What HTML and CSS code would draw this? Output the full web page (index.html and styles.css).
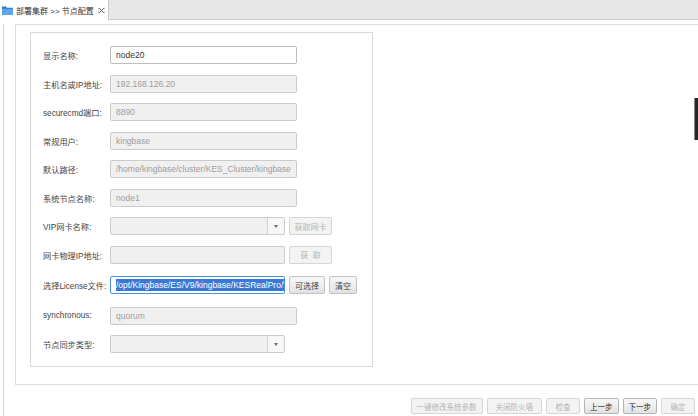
FILE: index.html
```html
<!DOCTYPE html>
<html lang="zh-CN">
<head>
    <meta charset="UTF-8">
    <title>节点配置</title>
    <link rel="stylesheet" href="styles.css">
</head>
<body>
    <div class="tabbar">
        <div class="tab">
            <svg class="tab-icon" width="11" height="9" viewBox="0 0 11 9">
                <path d="M0 0.5h4l1 1.2h6V9H0z" fill="#2f7cc8"/>
                <path d="M0 2.8h11V9H0z" fill="#5aa6e8"/>
            </svg>
            <span class="tab-title">部署集群 &gt;&gt; 节点配置</span>
            <svg class="tab-close" width="7" height="7" viewBox="0 0 7 7">
                <path d="M1.2 1.2l4.6 4.6M5.8 1.2L1.2 5.8" stroke="#555" stroke-width="1"/>
                <path d="M0 0.5v2M7 0.5v2M0 4.5v2M7 4.5v2" stroke="#777" stroke-width="0.8"/>
            </svg>
        </div>
        <div class="tab-fill"></div>
    </div>

    <div class="editor">
        <div class="panel">
            <div class="form-box">
                <div class="row">
                    <span class="label">显示名称:</span>
                    <div class="field editable">node20</div>
                </div>
                <div class="row">
                    <span class="label">主机名或IP地址:</span>
                    <div class="field">192.168.126.20</div>
                </div>
                <div class="row">
                    <span class="label">securecmd端口:</span>
                    <div class="field">8890</div>
                </div>
                <div class="row">
                    <span class="label">常规用户:</span>
                    <div class="field">kingbase</div>
                </div>
                <div class="row">
                    <span class="label">默认路径:</span>
                    <div class="field">/home/kingbase/cluster/KES_Cluster/kingbase</div>
                </div>
                <div class="row">
                    <span class="label">系统节点名称:</span>
                    <div class="field">node1</div>
                </div>
                <div class="row">
                    <span class="label">VIP网卡名称:</span>
                    <div class="field combo"><span class="combo-arrow"><i class="caret"></i></span></div>
                    <button class="btn btn-fetch" disabled>获取网卡</button>
                </div>
                <div class="row">
                    <span class="label">网卡物理IP地址:</span>
                    <div class="field short"></div>
                    <button class="btn btn-fetch" disabled>获 &nbsp;取</button>
                </div>
                <div class="row spaced">
                    <span class="label">选择License文件:</span>
                    <div class="field short focused"><span class="selection">/opt/Kingbase/ES/V9/kingbase/KESRealPro/V9</span></div>
                    <button class="btn">可选择</button>
                    <button class="btn">清空</button>
                </div>
                <div class="row spaced">
                    <span class="label">synchronous:</span>
                    <div class="field">quorum</div>
                </div>
                <div class="row">
                    <span class="label">节点同步类型:</span>
                    <div class="field combo"><span class="combo-arrow"><i class="caret"></i></span></div>
                </div>
            </div>
        </div>

        <div class="actions">
            <button class="btn" disabled>一键修改系统参数</button>
            <button class="btn wide" disabled>关闭防火墙</button>
            <button class="btn" disabled>检查</button>
            <button class="btn">上一步</button>
            <button class="btn">下一步</button>
            <button class="btn" disabled>确定</button>
        </div>
    </div>

    <div class="side-handle"></div>
</body>
</html>
```

FILE: styles.css
```css
* {
    box-sizing: border-box;
    margin: 0;
    padding: 0;
}

body {
    position: relative;
    width: 698px;
    height: 416px;
    overflow: hidden;
    background: #fff;
    font-family: "Liberation Sans", "Noto Sans CJK SC", sans-serif;
    font-size: 8.2px;
    color: #444;
}

/* tab strip */
.tabbar {
    display: flex;
    height: 20px;
}

.tab {
    width: 109px;
    display: flex;
    align-items: center;
    padding-left: 2px;
    background: #fff;
    border-right: 1px solid #c8c8c8;
}

.tab-icon {
    margin-right: 3px;
}

.tab-title {
    font-size: 8px;
    color: #333;
    margin-right: 4px;
}

.tab-fill {
    flex: 1;
    background: #e7e7e7;
    border-bottom: 1px solid #cdcdcd;
}

/* editor area */
.editor {
    margin-left: 3px;
    border-left: 1px solid #d4d4d4;
    height: 396px;
}

.panel {
    margin: 4px -20px 0 11px;
    height: 361px;
    border: 1px solid #dcdcdc;
    padding: 7px 0 0 14px;
}

.form-box {
    width: 343px;
    height: 335px;
    border: 1px solid #d8d8d8;
    padding: 13px 0 0 12px;
    display: flex;
    flex-direction: column;
    gap: 10.5px;
}

.row {
    display: flex;
    align-items: center;
    height: 18px;
}

.row.spaced {
    margin-top: 2px;
}

.label {
    width: 67px;
    white-space: nowrap;
}

.field {
    width: 187px;
    height: 18px;
    padding: 0 5px;
    border: 1px solid #cbcbcb;
    border-radius: 2px;
    background: #f0f0f0;
    color: #9d9d9d;
    font-size: 8.5px;
    line-height: 16px;
    white-space: nowrap;
    overflow: hidden;
}

.field.editable {
    background: #fff;
    color: #333;
    border-color: #bdbdbd;
}

.field.short,
.field.combo {
    width: 175px;
}

.field.focused {
    background: #fff;
    border-color: #4b8fe0;
}

.selection {
    background: #3a78d8;
    color: #fff;
    padding: 1px 0;
}

.field.combo {
    display: flex;
    justify-content: flex-end;
    padding: 0;
}

.combo-arrow {
    width: 17px;
    height: 100%;
    border-left: 1px solid #d0d0d0;
    background: #f7f7f7;
    display: flex;
    align-items: center;
    justify-content: center;
}

.caret {
    border-left: 2.5px solid transparent;
    border-right: 2.5px solid transparent;
    border-top: 3px solid #6a6a6a;
}

/* buttons */
.btn {
    height: 18px;
    margin-left: 4px;
    padding: 0 5px;
    border: 1px solid #c2c2c2;
    border-radius: 2px;
    background: linear-gradient(#f8f8f8, #e2e2e2);
    color: #444;
    font-family: inherit;
    font-size: 8px;
    white-space: nowrap;
}

.btn:disabled {
    background: #f3f3f3;
    border-color: #d6d6d6;
    color: #b4b4b4;
}

.btn-fetch {
    width: 43px;
    padding: 0;
}

.actions {
    display: flex;
    justify-content: flex-end;
    gap: 4px;
    padding-right: 3px;
    margin-top: 13px;
}

.actions .btn {
    height: 16px;
    min-width: 34px;
    margin-left: 0;
    padding: 0 5px;
    font-size: 7.5px;
}

.actions .btn.wide {
    padding: 0 8px;
}

.actions .btn:not(:disabled) {
    color: #222;
    border-color: #b5b5b5;
}

/* dark handle at the right edge */
.side-handle {
    position: absolute;
    left: 694px;
    top: 98px;
    width: 4px;
    height: 42px;
    background: #262626;
    border-left: 1px solid #8c8c8c;
}
```
